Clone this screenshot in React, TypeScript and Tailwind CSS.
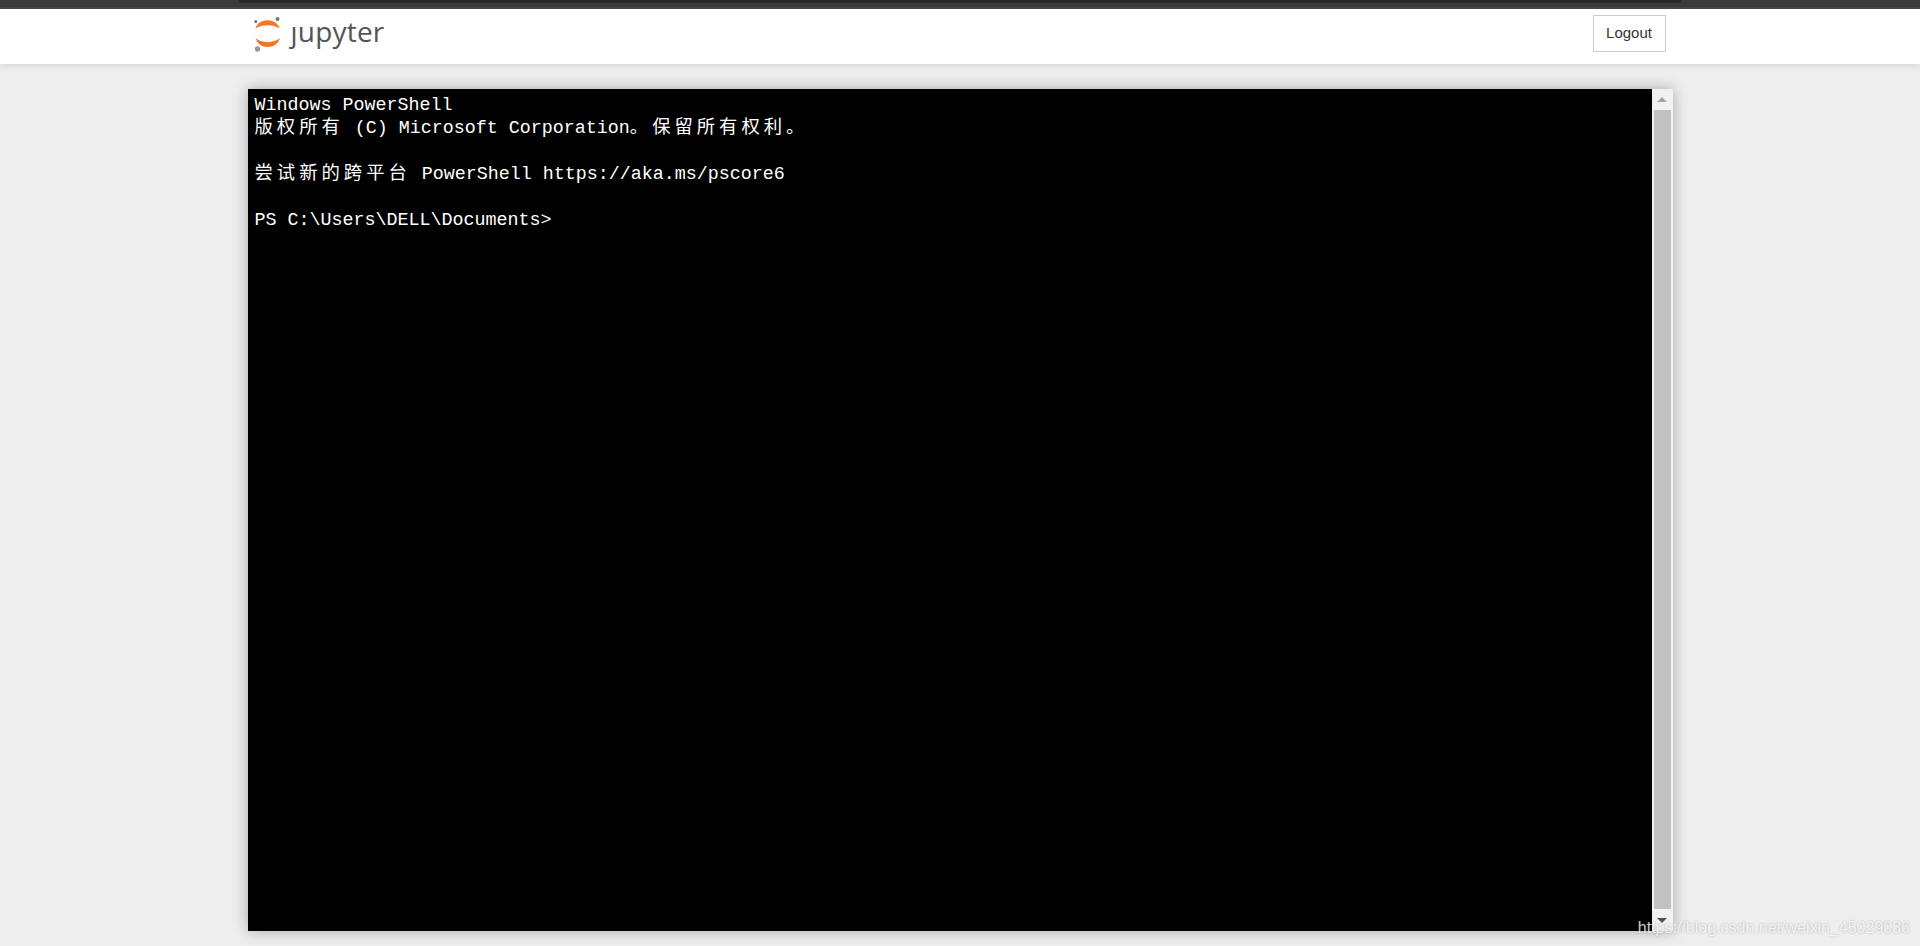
import React from "react"

const mono = "font-['Liberation_Mono','Noto_Sans_CJK_SC',monospace]"

function Cjk({ children }: { children: React.ReactNode }) {
  return <span className="font-['Noto_Sans_CJK_SC',sans-serif] leading-[0] tracking-[4px]">{children}</span>
}

function Line({ children }: { children?: React.ReactNode }) {
  return <div className="h-[23px]">{children}</div>
}

function JupyterMark() {
  return (
    <svg width="28" height="36" viewBox="0 0 28 36" className="block">
      <path d="M1.500 12.500C4 1.500 23 1.500 25.500 12.500C20 8 7 8 1.500 12.500Z" fill="#f37726" />
      <path d="M1.500 22C7 27.500 20 27.500 26 22C23 34 4.500 34 1.500 22Z" fill="#f37726" />
      <circle cx="23.500" cy="3" r="2" fill="#767677" />
      <circle cx="1.800" cy="5.700" r="1.400" fill="#616262" />
      <circle cx="3.500" cy="33" r="2.700" fill="#989798" />
    </svg>
  )
}

function Scrollbar() {
  return (
    <div className="flex w-[21px] flex-col items-center bg-[#f1f1f1]">
      <div className="flex h-[21px] w-full items-center justify-center">
        <div className="h-0 w-0 border-x-[5px] border-b-[5px] border-x-transparent border-b-[#a3a3a3]" />
      </div>
      <div className="w-[17px] flex-1 bg-[#c1c1c1]" />
      <div className="flex h-[22px] w-full items-center justify-center">
        <div className="h-0 w-0 border-x-[5px] border-t-[5px] border-x-transparent border-t-[#505050]" />
      </div>
    </div>
  )
}

export default function App() {
  return (
    <div className="relative flex h-[946px] flex-col overflow-hidden bg-[#eeeeee]">
      {/* browser edge */}
      <div className="flex h-[9px] justify-center border-b-2 border-b-[#4a4a4a] bg-[#3c3c3c]">
        <div className="h-[3px] w-[1444px] rounded-b-sm bg-[#2b2b2b]" />
      </div>

      <header className="relative z-10 h-[55px] bg-white shadow-[0_1px_8px_rgba(0,0,0,0.12)]">
        <div className="mx-auto flex h-full w-[1425px] items-start justify-between pl-[6px] pr-[7px]">
          <div className="flex items-start gap-[9px] pt-[7px]">
            <JupyterMark />
            <span className="font-['Open_Sans',sans-serif] text-[28px] leading-[30px] font-normal tracking-[0.2px] text-[#555555]">ȷupyter</span>
          </div>
          <button className="mt-[6px] h-[37px] w-[73px] border border-[#cccccc] bg-white font-['Liberation_Sans',sans-serif] text-[15px] text-[#333333]">
            Logout
          </button>
        </div>
      </header>

      <main className="mx-auto mt-[25px] flex h-[842px] w-[1425px] shadow-[0_0_14px_rgba(0,0,0,0.3)]">
        <div className={`flex-1 bg-black pl-[7px] pt-[5px] text-[18.33px] leading-[23px] whitespace-pre text-white ${mono}`}>
          <Line>Windows PowerShell</Line>
          <Line><Cjk>版权所有</Cjk> (C) Microsoft Corporation<Cjk>。保留所有权利。</Cjk></Line>
          <Line />
          <Line><Cjk>尝试新的跨平台</Cjk> PowerShell https://aka.ms/pscore6</Line>
          <Line />
          <Line>PS C:\Users\DELL\Documents&gt;</Line>
        </div>
        <Scrollbar />
      </main>

      {/* watermark */}
      <div className="absolute right-[10px] bottom-[8px] font-['Liberation_Sans',sans-serif] text-[16px] leading-[20px] text-white/80 [text-shadow:0_0_2px_rgba(0,0,0,0.3)]">
        https://blog.csdn.net/weixin_45029036
      </div>
    </div>
  )
}
